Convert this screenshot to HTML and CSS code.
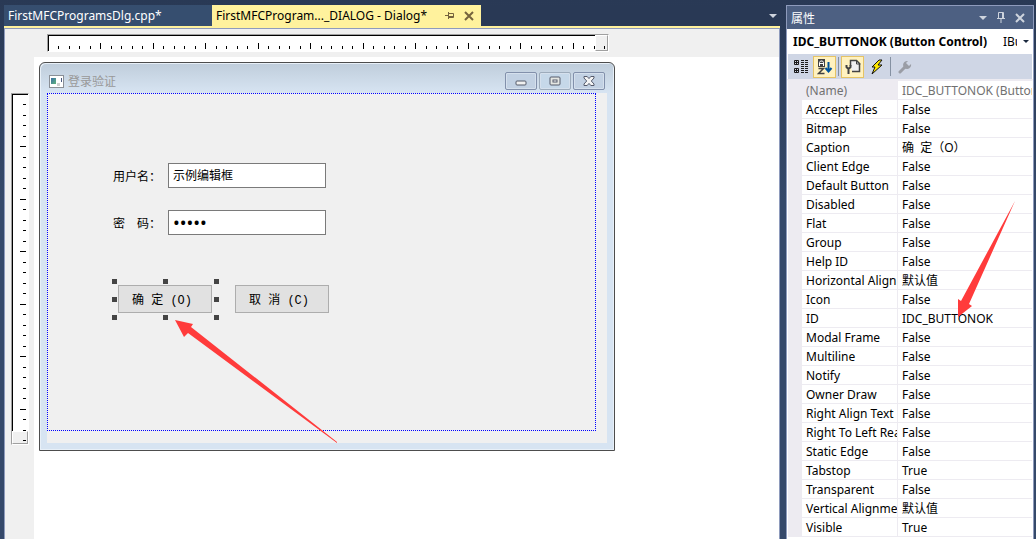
FILE: index.html
```html
<!DOCTYPE html>
<html lang="zh-CN">
<head>
    <meta charset="UTF-8">
    <meta name="viewport" content="width=device-width, initial-scale=1.0">
    <title>FirstMFCPrograms - Dialog</title>
    <link rel="stylesheet" href="styles.css">
</head>
<body>
    <main class="editor">
        <div class="tabs">
            <button class="tab">FirstMFCProgramsDlg.cpp*</button>
            <div class="tab active">
                <button class="tab-name">FirstMFCProgram..._DIALOG - Dialog*</button>
                <button class="icon-btn" aria-label="Pin">
                    <svg width="9" height="9" viewBox="0 0 9 9" fill="none" stroke="#75633d"><path d="M0 4.5h3M3.5 1v7M3.5 2.5h5v4M3.5 5.5h5M3.5 6.5h5"/></svg>
                </button>
                <button class="icon-btn" aria-label="Close">
                    <svg width="10" height="10" viewBox="0 0 10 10" stroke="#75633d" stroke-width="2"><path d="M1 1l8 8M9 1l-8 8"/></svg>
                </button>
            </div>
            <button class="icon-btn tab-list" aria-label="Open documents">
                <svg width="8" height="4" viewBox="0 0 8 4"><path d="M0 0h8L4 4z" fill="#ced4dd"/></svg>
            </button>
        </div>

        <div class="designer">
            <div class="ruler-h">
                <svg class="ticks" width="100%" height="100%">
                    <defs>
                        <pattern id="ticks-h" width="105" height="15" patternUnits="userSpaceOnUse">
                            <path d="M0 8h1v6h-1zM52 8h1v6h-1zM10 11h1v3h-1zM21 11h1v3h-1zM31 11h1v3h-1zM42 11h1v3h-1zM63 11h1v3h-1zM73 11h1v3h-1zM84 11h1v3h-1zM94 11h1v3h-1z"/>
                        </pattern>
                    </defs>
                    <rect width="100%" height="100%" fill="url(#ticks-h)"/>
                </svg>
                <div class="thumb"></div>
            </div>

            <div class="ruler-v">
                <svg class="ticks" width="100%" height="100%">
                    <defs>
                        <pattern id="ticks-v" width="15" height="105" patternUnits="userSpaceOnUse">
                            <path d="M8 0v1h6v-1zM8 52v1h6v-1zM11 10v1h3v-1zM11 21v1h3v-1zM11 31v1h3v-1zM11 42v1h3v-1zM11 63v1h3v-1zM11 73v1h3v-1zM11 84v1h3v-1zM11 94v1h3v-1z"/>
                        </pattern>
                    </defs>
                    <rect width="100%" height="100%" fill="url(#ticks-v)"/>
                </svg>
                <div class="thumb"></div>
            </div>

            <div class="canvas">
                <div class="dialog">
                    <div class="titlebar">
                        <svg width="15" height="13" viewBox="0 0 15 13">
                            <defs>
                                <linearGradient id="pane" x2="1" y2="1"><stop stop-color="#3b6ea5"/><stop offset="1" stop-color="#5fb37c"/></linearGradient>
                            </defs>
                            <path d="M0 0h15v13H0z" fill="#8a8f96"/>
                            <path d="M1 1h13v11H1z" fill="#fff"/>
                            <path d="M2 3h5v6H2z" fill="url(#pane)"/>
                            <path d="M8 8h3v3H8z" fill="#d0d0d0"/>
                            <path d="M12 3h1v4h-1z" fill="#4a5a80"/>
                        </svg>
                        <span class="title">登录验证</span>
                        <button class="win-btn" aria-label="Minimize">
                            <svg width="12" height="10" viewBox="0 0 12 10"><rect x="1" y="5" width="10" height="4" rx="1" fill="#f0f0f0" stroke="#555a6b"/></svg>
                        </button>
                        <button class="win-btn light" aria-label="Maximize">
                            <svg width="12" height="10" viewBox="0 0 12 10" stroke="#555a6b"><rect x="1" y="1" width="10" height="8" rx="1" fill="#e4e6e2"/><rect x="4" y="4" width="4" height="2" fill="#fff"/></svg>
                        </button>
                        <button class="win-btn" aria-label="Close">
                            <svg width="12" height="10" viewBox="0 0 12 10"><path d="M1 .5h3.2L6 2.6 7.800 .5H11v1.500L8.300 5 11 8v1.500H7.800L6 7.400 4.200 9.500H1V8l2.700-3L1 2z" fill="#f4f4f4" stroke="#555a6b"/></svg>
                        </button>
                    </div>
                    <div class="client">
                        <form class="guide" onsubmit="return false">
                            <div class="field">
                                <label for="user">用户名：</label>
                                <input id="user" type="text" value="示例编辑框">
                            </div>
                            <div class="field">
                                <label for="pass">密　码：</label>
                                <input id="pass" type="password" value="12345">
                            </div>
                            <div class="actions">
                                <div class="selected">
                                    <button class="btn">确 定 (O)</button>
                                    <i class="handle nw"></i><i class="handle n"></i><i class="handle ne"></i>
                                    <i class="handle w"></i><i class="handle e"></i>
                                    <i class="handle sw"></i><i class="handle s"></i><i class="handle se"></i>
                                </div>
                                <button class="btn">取 消 (C)</button>
                            </div>
                        </form>
                        <svg class="arrow arrow-button" width="162" height="123" viewBox="0 0 162 123"><path d="M0 0l18 4-2 3 146 115v1L13 13l-4 4z"/></svg>
                    </div>
                </div>
            </div>
        </div>
    </main>

    <aside class="properties">
        <header class="panel-head">
            <span class="panel-title">属性</span>
            <button class="icon-btn" aria-label="Options">
                <svg width="8" height="4" viewBox="0 0 8 4"><path d="M0 0h8L4 4z" fill="#ced4dd"/></svg>
            </button>
            <button class="icon-btn" aria-label="Auto hide">
                <svg width="8" height="11" viewBox="0 0 8 11" fill="none" stroke="#ced4dd"><path d="M1.500 6V.5h5V6M5.500 .5V6M0 6.500h8M4 7v4"/></svg>
            </button>
            <button class="icon-btn" aria-label="Close">
                <svg width="10" height="10" viewBox="0 0 10 10" stroke="#ced4dd" stroke-width="2"><path d="M1 1l8 8M9 1l-8 8"/></svg>
            </button>
        </header>

        <div class="object">
            <select aria-label="Object">
                <option>IDC_BUTTONOK (Button Control)</option>
            </select>
            <span class="object-type">IButtonEditor</span>
            <svg width="6" height="3" viewBox="0 0 6 3"><path d="M0 0h6L3 3z" fill="#1b293e"/></svg>
        </div>

        <div class="toolbar">
            <button class="tool" aria-label="Categorized">
                <svg width="16" height="16" viewBox="0 0 16 16" fill="none" stroke="#1b1b1b"><path d="M1.500 1.500h4v4h-4zM1.500 9.500h4v4h-4z"/><path d="M2 3.500h3M3.500 2v3M2 11.500h3M3.500 10v3"/><path d="M8 1.500h7M8 3.500h7M8 5.500h7M8 7.500h7M8 9.500h7M8 11.500h7M8 13.500h7" stroke-dasharray="3 1"/></svg>
            </button>
            <button class="tool on" aria-label="Alphabetical">
                <svg width="16" height="16" viewBox="0 0 16 16" fill="none"><path d="M1 0h7v8H1z" fill="#424242"/><path d="M2.500 7V3.500l1-1.500h2l1 1.500V7M2.500 4.500h4" stroke="#fff"/><path d="M1.500 9.500h5l-5 5h6" stroke="#424242" stroke-width="1.500"/><path d="M11.500 3v9M8.500 9l3 3.500 3-3.500" stroke="#00539c" stroke-width="2"/></svg>
            </button>
            <span class="sep"></span>
            <button class="tool on" aria-label="Properties">
                <svg width="16" height="16" viewBox="0 0 16 16" fill="none"><path d="M5.500 7V1.500h6l3 3v8H7" fill="#f0eff1" stroke="#424242" stroke-width="1.500"/><path d="M11.500 1v4h4" stroke="#424242"/><path d="M1.500 6v2l2 2 2-2V6M3.500 9.500V15" stroke="#424242" stroke-width="2"/></svg>
            </button>
            <button class="tool" aria-label="Events">
                <svg width="14" height="16" viewBox="0 0 14 16"><path d="M9 1h3L8 6h4L2 15l3-7H2z" fill="#ffe800" stroke="#111"/></svg>
            </button>
            <span class="sep"></span>
            <button class="tool" aria-label="Property pages" disabled>
                <svg width="14" height="14" viewBox="0 0 14 14"><path d="M2 12l6-6" stroke="#9a9da5" stroke-width="3" stroke-linecap="round"/><path d="M10 1a4 4 0 1 0 3 3l-2 2-3-3z" fill="#9a9da5"/></svg>
            </button>
        </div>

        <table class="grid">
            <tbody>
                <tr class="readonly"><th>(Name)</th><td>IDC_BUTTONOK (Button Control)</td></tr>
                <tr><th>Acccept Files</th><td>False</td></tr>
                <tr><th>Bitmap</th><td>False</td></tr>
                <tr><th>Caption</th><td>确&nbsp; 定（O）</td></tr>
                <tr><th>Client Edge</th><td>False</td></tr>
                <tr><th>Default Button</th><td>False</td></tr>
                <tr><th>Disabled</th><td>False</td></tr>
                <tr><th>Flat</th><td>False</td></tr>
                <tr><th>Group</th><td>False</td></tr>
                <tr><th>Help ID</th><td>False</td></tr>
                <tr><th>Horizontal Alignment</th><td>默认值</td></tr>
                <tr><th>Icon</th><td>False</td></tr>
                <tr><th>ID</th><td>IDC_BUTTONOK</td></tr>
                <tr><th>Modal Frame</th><td>False</td></tr>
                <tr><th>Multiline</th><td>False</td></tr>
                <tr><th>Notify</th><td>False</td></tr>
                <tr><th>Owner Draw</th><td>False</td></tr>
                <tr><th>Right Align Text</th><td>False</td></tr>
                <tr><th>Right To Left Reading Order</th><td>False</td></tr>
                <tr><th>Static Edge</th><td>False</td></tr>
                <tr><th>Tabstop</th><td>True</td></tr>
                <tr><th>Transparent</th><td>False</td></tr>
                <tr><th>Vertical Alignment</th><td>默认值</td></tr>
                <tr><th>Visible</th><td>True</td></tr>
            </tbody>
        </table>
        <svg class="arrow arrow-id" width="57" height="116" viewBox="0 0 57 116"><path d="M57 0L11 103l3 2L0 116V98l3 2z"/></svg>
    </aside>
</body>
</html>
```
FILE: styles.css
```css
:root {
    --frame: #293955;
    --frame-low: #35496a;
    --line: #8e9bbc;
    --tab-active: #fff29d;
    --face: #f0f0f0;
    --gutter: #edebf1;
    --ui-font: "Noto Sans", "Noto Sans CJK SC", sans-serif;
    --dialog-font: "Noto Sans CJK SC", sans-serif;
}

* {
    margin: 0;
    padding: 0;
    box-sizing: border-box;
}

body {
    display: grid;
    grid-template-columns: minmax(0, 1fr) 248px;
    gap: 6px;
    height: 100vh;
    padding: 5px 2px 0 4px;
    overflow: hidden;
    background: linear-gradient(var(--frame), var(--frame-low) 200px);
    font-family: var(--ui-font);
    font-size: 12px;
    color: #000;
}

button,
input,
select {
    border: none;
    background: none;
    font: inherit;
    color: inherit;
}

svg {
    display: block;
    flex-shrink: 0;
}

/* document tabs */
.editor {
    display: flex;
    flex-direction: column;
    min-width: 0;
}

.tabs {
    display: flex;
    height: 23px;
    border-bottom: 2px solid var(--tab-active);
    background: var(--frame);
}

.tab {
    width: 208px;
    padding: 0 4px;
    background: #364e6f;
    color: #fff;
    text-align: left;
    white-space: nowrap;
}

.tab.active {
    display: flex;
    align-items: center;
    gap: 10px;
    width: 269px;
    padding: 0 7px 0 4px;
    background: var(--tab-active);
    color: #000;
}

.tab-name {
    flex: 1;
    text-align: left;
}

.tab-list {
    margin-left: auto;
    padding-right: 3px;
}

.icon-btn {
    display: flex;
    align-items: center;
}

/* dialog designer */
.designer {
    flex: 1;
    display: grid;
    grid-template-columns: 29px minmax(0, 1fr);
    grid-template-rows: 28px minmax(0, 1fr);
    border: 1px solid var(--line);
    border-bottom: none;
    background: var(--face);
}

.ruler-h,
.ruler-v {
    position: relative;
    display: flex;
    justify-content: flex-end;
    border: 1px solid #fff;
    border-top-color: #a0a0a0;
    border-left-color: #a0a0a0;
    background: #fff;
}

.ruler-h {
    grid-column: 1 / 3;
    width: 562px;
    height: 18px;
    margin: 5px 0 0 42px;
    box-shadow: inset 1px 1px #000;
}

.ruler-v {
    flex-direction: column;
    width: 18px;
    height: 352px;
    margin: 36px 0 0 6px;
    box-shadow: inset 1px 1px #000;
}

.ticks {
    position: absolute;
    inset: 0;
    z-index: 1;
}

.thumb {
    border: 1px solid #a0a0a0;
    border-top-color: #fff;
    border-left-color: #fff;
    background: var(--face);
}

.ruler-h .thumb {
    width: 13px;
}

.ruler-v .thumb {
    height: 13px;
}

.canvas {
    padding: 5px;
    background: #fff;
}

.dialog {
    width: 576px;
    padding: 0 7px 7px;
    border: 1px solid #4d4d4d;
    border-radius: 6px 6px 0 0;
    background: linear-gradient(#bfcddb, #d7e4f2 30px);
    box-shadow: inset 1px 1px #e8f0f8, inset -1px -1px #e8f0f8;
}

.titlebar {
    display: flex;
    align-items: center;
    gap: 2px;
    height: 30px;
    padding: 6px 2px 0;
}

.title {
    flex: 1;
    padding-left: 2px;
    color: #999;
}

.win-btn {
    display: flex;
    align-items: center;
    justify-content: center;
    width: 32px;
    height: 18px;
    border: 1px solid #8290ab;
    border-radius: 2px;
    background: #c2d1e3;
    box-shadow: inset 0 0 0 1px #d5e0ed;
}

.win-btn.light {
    border-color: #9dabbb;
    background: #c6d8e9;
}

.client {
    position: relative;
    height: 350px;
    background: var(--face);
}

.guide {
    width: 549px;
    height: 338px;
    padding: 69px 65px;
    border: 1px dotted #0000ff;
    font-family: var(--dialog-font);
}

.field {
    display: flex;
    align-items: center;
    gap: 7px;
    margin-bottom: 22px;
}

.field label {
    width: 48px;
    white-space: nowrap;
}

.field input {
    width: 158px;
    height: 25px;
    padding: 0 4px 2px;
    border: 1px solid #7a7a7a;
    background: #fff;
}

.field input[type="password"] {
    font-family: "Noto Sans", sans-serif;
    font-size: 18px;
}

.actions {
    display: flex;
    gap: 23px;
    padding: 28px 5px;
}

.btn {
    width: 94px;
    height: 28px;
    padding-right: 6px;
    border: 1px solid #adadad;
    background: #e1e1e1;
    font-family: "Liberation Mono", "Noto Sans CJK SC", monospace;
    white-space: nowrap;
}

.selected {
    position: relative;
}

.handle {
    position: absolute;
    width: 5px;
    height: 5px;
    background: #444;
}

.nw, .n, .ne { top: -6px; }
.w, .e { top: 12px; }
.sw, .s, .se { bottom: -7px; }
.nw, .w, .sw { left: -6px; }
.n, .s { left: 45px; }
.ne, .e, .se { right: -7px; }

/* red callout arrows */
.arrow {
    position: absolute;
    fill: #ff3b3b;
    pointer-events: none;
}

.arrow-button {
    left: 128px;
    top: 227px;
}

.arrow-id {
    left: 171px;
    top: 195px;
}

/* properties window */
.properties {
    position: relative;
    min-height: 0;
    border: 1px solid var(--line);
    border-bottom: none;
    background: #fff;
}

.panel-head {
    display: flex;
    align-items: center;
    gap: 10px;
    height: 23px;
    padding: 0 8px 0 4px;
    background: #4d6082;
    color: #fff;
}

.panel-title {
    flex: 1;
}

.object {
    display: flex;
    align-items: center;
    height: 25px;
    padding: 0 4px 0 6px;
}

.object select {
    flex-shrink: 0;
    width: 210px;
    appearance: none;
    font-weight: bold;
}

.object-type {
    flex: 1;
    min-width: 0;
    margin-right: 6px;
    overflow: hidden;
}

.toolbar {
    display: flex;
    align-items: center;
    gap: 1px;
    height: 25px;
    margin: 0 1px;
    padding: 0 1px;
    background: #cfd6e5;
}

.tool {
    display: flex;
    align-items: center;
    justify-content: center;
    width: 23px;
    height: 22px;
}

.tool.on {
    border: 1px solid #e5c365;
    background: #fff2c0;
}

.sep {
    width: 1px;
    height: 19px;
    margin: 0 1px;
    background: #8591a2;
}

.grid {
    width: 100%;
    border-top: 2px solid var(--gutter);
    border-right: 1px solid #fff;
    border-left: 1px solid #fff;
    border-spacing: 0;
    table-layout: fixed;
}

.grid th,
.grid td {
    height: 19px;
    padding: 2px 0 0 4px;
    border-bottom: 1px solid var(--gutter);
    overflow: hidden;
    font-weight: normal;
    line-height: 16px;
    text-align: left;
    white-space: nowrap;
}

.grid th {
    width: 110px;
    border-left: 14px solid var(--gutter);
    border-right: 1px solid var(--gutter);
}

.readonly {
    color: #717171;
}

.readonly th {
    background: var(--gutter);
}
```
